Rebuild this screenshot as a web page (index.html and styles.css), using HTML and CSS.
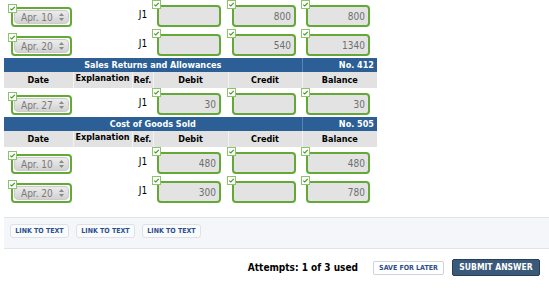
FILE: index.html
```html
<!doctype html>
<html lang="en">
<head>
    <meta charset="UTF-8">
    <title>General Ledger</title>
    <link rel="stylesheet" href="styles.css">
</head>
<body>

    <table class="ledger">
        <colgroup>
            <col class="colDate"><col class="colExpl"><col class="colRef">
            <col class="colDebit"><col class="colCredit"><col class="colBalance">
        </colgroup>

        <!-- tail of the previous account -->
        <tr class="entry">
            <td><div class="dateBox"><svg class="check" width="9" height="9" viewBox="0 0 9 9"><rect x="0.5" y="0.5" width="8" height="8" fill="#fff" stroke="#8cc46a"/><polyline points="2.2,4.6 3.8,6 6.8,2.8" fill="none" stroke="#4c9a2a" stroke-width="1.2"/></svg><div class="dateSelect">Apr. 10<svg class="spin" width="5" height="8" viewBox="0 0 5 8"><polygon points="2.5,0 5,3 0,3" fill="#8a8a8a"/><polygon points="0,5 5,5 2.5,8" fill="#8a8a8a"/></svg></div></div></td>
            <td></td>
            <td class="ref">J1</td>
            <td><div class="amount"><svg class="check" width="9" height="9" viewBox="0 0 9 9"><rect x="0.5" y="0.5" width="8" height="8" fill="#fff" stroke="#8cc46a"/><polyline points="2.2,4.6 3.8,6 6.8,2.8" fill="none" stroke="#4c9a2a" stroke-width="1.2"/></svg><input class="amountInput" value="" readonly></div></td>
            <td><div class="amount"><svg class="check" width="9" height="9" viewBox="0 0 9 9"><rect x="0.5" y="0.5" width="8" height="8" fill="#fff" stroke="#8cc46a"/><polyline points="2.2,4.6 3.8,6 6.8,2.8" fill="none" stroke="#4c9a2a" stroke-width="1.2"/></svg><input class="amountInput" value="800" readonly></div></td>
            <td><div class="amount"><svg class="check" width="9" height="9" viewBox="0 0 9 9"><rect x="0.5" y="0.5" width="8" height="8" fill="#fff" stroke="#8cc46a"/><polyline points="2.2,4.6 3.8,6 6.8,2.8" fill="none" stroke="#4c9a2a" stroke-width="1.2"/></svg><input class="amountInput" value="800" readonly></div></td>
        </tr>
        <tr class="entry">
            <td><div class="dateBox"><svg class="check" width="9" height="9" viewBox="0 0 9 9"><rect x="0.5" y="0.5" width="8" height="8" fill="#fff" stroke="#8cc46a"/><polyline points="2.2,4.6 3.8,6 6.8,2.8" fill="none" stroke="#4c9a2a" stroke-width="1.2"/></svg><div class="dateSelect">Apr. 20<svg class="spin" width="5" height="8" viewBox="0 0 5 8"><polygon points="2.5,0 5,3 0,3" fill="#8a8a8a"/><polygon points="0,5 5,5 2.5,8" fill="#8a8a8a"/></svg></div></div></td>
            <td></td>
            <td class="ref">J1</td>
            <td><div class="amount"><svg class="check" width="9" height="9" viewBox="0 0 9 9"><rect x="0.5" y="0.5" width="8" height="8" fill="#fff" stroke="#8cc46a"/><polyline points="2.2,4.6 3.8,6 6.8,2.8" fill="none" stroke="#4c9a2a" stroke-width="1.2"/></svg><input class="amountInput" value="" readonly></div></td>
            <td><div class="amount"><svg class="check" width="9" height="9" viewBox="0 0 9 9"><rect x="0.5" y="0.5" width="8" height="8" fill="#fff" stroke="#8cc46a"/><polyline points="2.2,4.6 3.8,6 6.8,2.8" fill="none" stroke="#4c9a2a" stroke-width="1.2"/></svg><input class="amountInput" value="540" readonly></div></td>
            <td><div class="amount"><svg class="check" width="9" height="9" viewBox="0 0 9 9"><rect x="0.5" y="0.5" width="8" height="8" fill="#fff" stroke="#8cc46a"/><polyline points="2.2,4.6 3.8,6 6.8,2.8" fill="none" stroke="#4c9a2a" stroke-width="1.2"/></svg><input class="amountInput" value="1340" readonly></div></td>
        </tr>

        <!-- Sales Returns and Allowances -->
        <tr class="acctTitle">
            <td colspan="5">Sales Returns and Allowances</td>
            <td class="acctNo">No. 412</td>
        </tr>
        <tr class="colHeads">
            <td>Date</td><td class="expl">Explanation</td><td>Ref.</td><td>Debit</td><td>Credit</td><td>Balance</td>
        </tr>
        <tr class="entry">
            <td><div class="dateBox"><svg class="check" width="9" height="9" viewBox="0 0 9 9"><rect x="0.5" y="0.5" width="8" height="8" fill="#fff" stroke="#8cc46a"/><polyline points="2.2,4.6 3.8,6 6.8,2.8" fill="none" stroke="#4c9a2a" stroke-width="1.2"/></svg><div class="dateSelect">Apr. 27<svg class="spin" width="5" height="8" viewBox="0 0 5 8"><polygon points="2.5,0 5,3 0,3" fill="#8a8a8a"/><polygon points="0,5 5,5 2.5,8" fill="#8a8a8a"/></svg></div></div></td>
            <td></td>
            <td class="ref">J1</td>
            <td><div class="amount"><svg class="check" width="9" height="9" viewBox="0 0 9 9"><rect x="0.5" y="0.5" width="8" height="8" fill="#fff" stroke="#8cc46a"/><polyline points="2.2,4.6 3.8,6 6.8,2.8" fill="none" stroke="#4c9a2a" stroke-width="1.2"/></svg><input class="amountInput" value="30" readonly></div></td>
            <td><div class="amount"><svg class="check" width="9" height="9" viewBox="0 0 9 9"><rect x="0.5" y="0.5" width="8" height="8" fill="#fff" stroke="#8cc46a"/><polyline points="2.2,4.6 3.8,6 6.8,2.8" fill="none" stroke="#4c9a2a" stroke-width="1.2"/></svg><input class="amountInput" value="" readonly></div></td>
            <td><div class="amount"><svg class="check" width="9" height="9" viewBox="0 0 9 9"><rect x="0.5" y="0.5" width="8" height="8" fill="#fff" stroke="#8cc46a"/><polyline points="2.2,4.6 3.8,6 6.8,2.8" fill="none" stroke="#4c9a2a" stroke-width="1.2"/></svg><input class="amountInput" value="30" readonly></div></td>
        </tr>

        <!-- Cost of Goods Sold -->
        <tr class="acctTitle">
            <td colspan="5">Cost of Goods Sold</td>
            <td class="acctNo">No. 505</td>
        </tr>
        <tr class="colHeads">
            <td>Date</td><td class="expl">Explanation</td><td>Ref.</td><td>Debit</td><td>Credit</td><td>Balance</td>
        </tr>
        <tr class="entry">
            <td><div class="dateBox"><svg class="check" width="9" height="9" viewBox="0 0 9 9"><rect x="0.5" y="0.5" width="8" height="8" fill="#fff" stroke="#8cc46a"/><polyline points="2.2,4.6 3.8,6 6.8,2.8" fill="none" stroke="#4c9a2a" stroke-width="1.2"/></svg><div class="dateSelect">Apr. 10<svg class="spin" width="5" height="8" viewBox="0 0 5 8"><polygon points="2.5,0 5,3 0,3" fill="#8a8a8a"/><polygon points="0,5 5,5 2.5,8" fill="#8a8a8a"/></svg></div></div></td>
            <td></td>
            <td class="ref">J1</td>
            <td><div class="amount"><svg class="check" width="9" height="9" viewBox="0 0 9 9"><rect x="0.5" y="0.5" width="8" height="8" fill="#fff" stroke="#8cc46a"/><polyline points="2.2,4.6 3.8,6 6.8,2.8" fill="none" stroke="#4c9a2a" stroke-width="1.2"/></svg><input class="amountInput" value="480" readonly></div></td>
            <td><div class="amount"><svg class="check" width="9" height="9" viewBox="0 0 9 9"><rect x="0.5" y="0.5" width="8" height="8" fill="#fff" stroke="#8cc46a"/><polyline points="2.2,4.6 3.8,6 6.8,2.8" fill="none" stroke="#4c9a2a" stroke-width="1.2"/></svg><input class="amountInput" value="" readonly></div></td>
            <td><div class="amount"><svg class="check" width="9" height="9" viewBox="0 0 9 9"><rect x="0.5" y="0.5" width="8" height="8" fill="#fff" stroke="#8cc46a"/><polyline points="2.2,4.6 3.8,6 6.8,2.8" fill="none" stroke="#4c9a2a" stroke-width="1.2"/></svg><input class="amountInput" value="480" readonly></div></td>
        </tr>
        <tr class="entry">
            <td><div class="dateBox"><svg class="check" width="9" height="9" viewBox="0 0 9 9"><rect x="0.5" y="0.5" width="8" height="8" fill="#fff" stroke="#8cc46a"/><polyline points="2.2,4.6 3.8,6 6.8,2.8" fill="none" stroke="#4c9a2a" stroke-width="1.2"/></svg><div class="dateSelect">Apr. 20<svg class="spin" width="5" height="8" viewBox="0 0 5 8"><polygon points="2.5,0 5,3 0,3" fill="#8a8a8a"/><polygon points="0,5 5,5 2.5,8" fill="#8a8a8a"/></svg></div></div></td>
            <td></td>
            <td class="ref">J1</td>
            <td><div class="amount"><svg class="check" width="9" height="9" viewBox="0 0 9 9"><rect x="0.5" y="0.5" width="8" height="8" fill="#fff" stroke="#8cc46a"/><polyline points="2.2,4.6 3.8,6 6.8,2.8" fill="none" stroke="#4c9a2a" stroke-width="1.2"/></svg><input class="amountInput" value="300" readonly></div></td>
            <td><div class="amount"><svg class="check" width="9" height="9" viewBox="0 0 9 9"><rect x="0.5" y="0.5" width="8" height="8" fill="#fff" stroke="#8cc46a"/><polyline points="2.2,4.6 3.8,6 6.8,2.8" fill="none" stroke="#4c9a2a" stroke-width="1.2"/></svg><input class="amountInput" value="" readonly></div></td>
            <td><div class="amount"><svg class="check" width="9" height="9" viewBox="0 0 9 9"><rect x="0.5" y="0.5" width="8" height="8" fill="#fff" stroke="#8cc46a"/><polyline points="2.2,4.6 3.8,6 6.8,2.8" fill="none" stroke="#4c9a2a" stroke-width="1.2"/></svg><input class="amountInput" value="780" readonly></div></td>
        </tr>
    </table>

    <div class="linkPanel">
        <div class="linkBtn">LINK TO TEXT</div>
        <div class="linkBtn">LINK TO TEXT</div>
        <div class="linkBtn">LINK TO TEXT</div>
    </div>

    <div class="submitBar">
        <div class="attempts">Attempts: 1 of 3 used</div>
        <div class="saveBtn">SAVE FOR LATER</div>
        <div class="submitBtn">SUBMIT ANSWER</div>
    </div>

</body>
</html>
```

FILE: styles.css
```css
body
{
    margin:           0;
    background-color: #fff;
    font-family:      "DejaVu Sans Condensed", "DejaVu Sans", sans-serif;
    color:            #000;
}

.ledger
{
    margin-left:      4px;
    width:            373px;
    table-layout:     fixed;
    border-collapse:  collapse;
}

.colDate    { width: 69px; }
.colExpl    { width: 59px; }
.colRef     { width: 21px; }
.colDebit   { width: 75px; }
.colCredit  { width: 74px; }
.colBalance { width: 75px; }

.ledger td
{
    padding:          0;
}

.entry td
{
    height:           29px;
    vertical-align:   top;
}

.entry td.ref
{
    vertical-align:   middle;
    text-align:       center;
    font-size:        10px;
    padding-left:     1px;
}

.check
{
    position:         absolute;
    left:             -5px;
    top:              -5px;
    display:          block;
}

.dateBox
{
    position:         relative;
    box-sizing:       border-box;
    width:            61px;
    height:           20px;
    margin:           7px 0 0 7px;
    padding:          1px;
    border:           2px solid #64a838;
    border-radius:    4px;
}

.dateSelect
{
    display:          flex;
    align-items:      center;
    justify-content:  space-between;
    height:           14px;
    padding:          0 4px 0 6px;
    border-radius:    4px;
    background:       linear-gradient(#ececec, #d2d2d2);
    border:           1px solid #cbcbcb;
    box-sizing:       border-box;
    font-size:        10px;
    color:            #7a7a7a;
}

.amount
{
    position:         relative;
    width:            64px;
    margin:           5px 0 0 4px;
}

.amountInput
{
    display:          block;
    box-sizing:       border-box;
    width:            64px;
    height:           22px;
    margin:           0;
    padding:          0 3px;
    border:           2px solid #64a838;
    border-radius:    4px;
    background-color: #e3e3e3;
    text-align:       right;
    font-family:      "DejaVu Sans Condensed", "DejaVu Sans", sans-serif;
    font-size:        10px;
    color:            #6e6e6e;
    outline:          none;
}

.acctTitle td
{
    height:           14px;
    background-color: #2b5f96;
    color:            #fff;
    font-size:        9px;
    font-weight:      bold;
    text-align:       center;
    line-height:      14px;
}

.acctTitle td.acctNo
{
    text-align:       right;
    padding-right:    3px;
    border-left:      1px solid #5a84b3;
}

.colHeads td
{
    height:           16px;
    line-height:      16px;
    background-color: #e2e2e2;
    border-left:      1px solid #f3f3f3;
    font-size:        9px;
    font-weight:      bold;
    text-align:       center;
    vertical-align:   middle;
}

.colHeads td:first-child
{
    border-left:      none;
}

.colHeads td.expl
{
    line-height:      13px;
    vertical-align:   top;
}

.linkPanel
{
    display:          flex;
    gap:              7px;
    margin:           12px 0 0 4px;
    padding:          6px 0 0 6px;
    box-sizing:       border-box;
    height:           32px;
    background-color: #f4f6f9;
    border-top:       1px solid #dfe3ea;
    border-bottom:    1px solid #dfe3ea;
}

.linkBtn
{
    width:            59px;
    height:           14px;
    box-sizing:       border-box;
    border:           1px solid #dde1e8;
    border-radius:    3px;
    background-color: #fafbfc;
    color:            #2b4f8c;
    font-size:        7px;
    font-weight:      bold;
    text-align:       center;
    line-height:      12px;
}

.submitBar
{
    display:          flex;
    justify-content:  flex-end;
    align-items:      center;
    margin-top:       10px;
    padding-right:    9px;
}

.attempts
{
    font-size:        10px;
    font-weight:      bold;
    margin-right:     15px;
}

.saveBtn
{
    width:            71px;
    height:           14px;
    box-sizing:       border-box;
    margin-right:     8px;
    border:           1px solid #cdd4de;
    border-radius:    2px;
    background-color: #fff;
    color:            #2b4f8c;
    font-size:        7px;
    font-weight:      bold;
    text-align:       center;
    line-height:      12px;
}

.submitBtn
{
    width:            88px;
    height:           17px;
    box-sizing:       border-box;
    border:           1px solid #26405a;
    border-radius:    2px;
    background-color: #3b5a7a;
    color:            #fff;
    font-size:        8.5px;
    font-weight:      bold;
    text-align:       center;
    line-height:      15px;
}
```
